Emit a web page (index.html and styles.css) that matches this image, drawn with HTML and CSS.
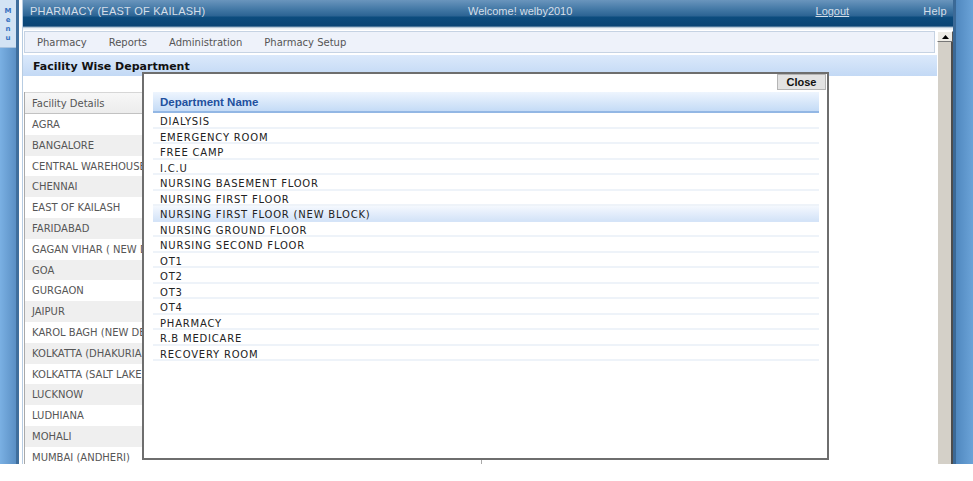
FILE: index.html
```html
<!doctype html>
<html lang="en">
<head>
<meta charset="utf-8" />
<title>Facility Wise Department</title>
<link rel="stylesheet" href="styles.css">
</head>
<body>

<div class="frame">
	<div class="side-menu">
		<div class="menu-tab">M<br>e<br>n<br>u</div>
		<div class="rail-fill"></div>
	</div>

	<div class="main">
		<div class="topbar">
			<span class="app-title">PHARMACY (EAST OF KAILASH)</span>
			<span class="welcome">Welcome! welby2010</span>
			<a class="logout" href="#">Logout</a>
			<span class="help">Help</span>
		</div>

		<div class="body-row">
			<div class="content">
				<nav class="menubar">
					<span>Pharmacy</span>
					<span>Reports</span>
					<span>Administration</span>
					<span>Pharmacy Setup</span>
				</nav>

				<div class="page-title">Facility Wise Department</div>

				<div class="facility-list">
					<div class="facility-head">Facility Details</div>
					<div class="facility-row">AGRA</div>
					<div class="facility-row">BANGALORE</div>
					<div class="facility-row">CENTRAL WAREHOUSE</div>
					<div class="facility-row">CHENNAI</div>
					<div class="facility-row">EAST OF KAILASH</div>
					<div class="facility-row">FARIDABAD</div>
					<div class="facility-row">GAGAN VIHAR ( NEW DELHI)</div>
					<div class="facility-row">GOA</div>
					<div class="facility-row">GURGAON</div>
					<div class="facility-row">JAIPUR</div>
					<div class="facility-row">KAROL BAGH (NEW DELHI)</div>
					<div class="facility-row">KOLKATTA (DHAKURIA)</div>
					<div class="facility-row">KOLKATTA (SALT LAKE)</div>
					<div class="facility-row">LUCKNOW</div>
					<div class="facility-row">LUDHIANA</div>
					<div class="facility-row">MOHALI</div>
					<div class="facility-row">MUMBAI (ANDHERI)</div>
				</div>
			</div>

			<div class="scrollbar">
				<div class="scroll-up">
					<svg width="7" height="4" viewBox="0 0 7 4"><polygon points="0,4 3.5,0 7,4" fill="#000"/></svg>
				</div>
				<div class="scroll-track"></div>
			</div>
		</div>

		<!-- department popup -->
		<div class="modal">
			<div class="modal-bar">
				<button class="close-btn" type="button">Close</button>
			</div>
			<div class="dept-list">
				<div class="dept-head">Department Name</div>
				<div class="dept-row">DIALYSIS</div>
				<div class="dept-row">EMERGENCY ROOM</div>
				<div class="dept-row">FREE CAMP</div>
				<div class="dept-row">I.C.U</div>
				<div class="dept-row">NURSING BASEMENT FLOOR</div>
				<div class="dept-row">NURSING FIRST FLOOR</div>
				<div class="dept-row selected">NURSING FIRST FLOOR (NEW BLOCK)</div>
				<div class="dept-row">NURSING GROUND FLOOR</div>
				<div class="dept-row">NURSING SECOND FLOOR</div>
				<div class="dept-row">OT1</div>
				<div class="dept-row">OT2</div>
				<div class="dept-row">OT3</div>
				<div class="dept-row">OT4</div>
				<div class="dept-row">PHARMACY</div>
				<div class="dept-row">R.B MEDICARE</div>
				<div class="dept-row">RECOVERY ROOM</div>
			</div>
		</div>
	</div>

	<div class="right-strip"></div>
</div>

</body>
</html>
```

FILE: styles.css
```css
html, body {
	margin: 0;
	background: #fff;
}

body {
	font-family: "DejaVu Sans", Verdana, sans-serif;
	font-size: 10px;
	color: #222;
}

.frame {
	display: flex;
	align-items: stretch;
	height: 464px;
	overflow: hidden;
	background: #fff;
}

/* left "Menu" rail */
.side-menu {
	flex: none;
	width: 16px;
	margin-right: 3px;
	display: flex;
	flex-direction: column;
	border-right: 3px solid #3f6e9c;
}
.menu-tab {
	height: 48px;
	flex: none;
	box-sizing: border-box;
	padding-top: 7px;
	background: #d3e3f4;
	border-bottom: 1px solid #a9c4e0;
	color: #3570c0;
	font-weight: bold;
	font-size: 7px;
	line-height: 9px;
	text-align: center;
}
.rail-fill {
	flex: 1;
	background-color: #5f96cc;
	background-image: linear-gradient(90deg, #7ab0e3 0%, #5a8fc4 100%);
}

.main {
	flex: 1;
	min-width: 0;
	position: relative;
	display: flex;
	flex-direction: column;
	border-left: 1px solid #b7cce2;
}

/* title bar */
.topbar {
	flex: none;
	height: 30px;
	box-sizing: border-box;
	padding: 4px 6px 0 7px;
	display: flex;
	align-items: flex-start;
	background: linear-gradient(#6a95bd 0, #4479a6 9px, #2b6393 16px, #0c4c7e 17px,
		#0a4475 26px, #8aa6c0 27px, #e6edf3 28px, #f4f7fa 30px);
	color: #d5dfe9;
	font-family: "Liberation Sans", Arial, sans-serif;
	font-size: 11px;
	line-height: 14px;
}
.app-title {
	width: 438px;
	letter-spacing: 0.25px;
}
.welcome {
	flex: 1;
}
.logout {
	color: #d5dfe9;
	margin-right: 74px;
}
.help {
	letter-spacing: 0.3px;
}

.body-row {
	flex: 1;
	display: flex;
	min-height: 0;
}

.content {
	flex: 1;
	min-width: 0;
	padding-left: 1px;
	overflow: hidden;
}

.menubar {
	height: 22px;
	box-sizing: border-box;
	margin: 1px 2px 0 0;
	padding: 1px 0 0 12px;
	display: flex;
	gap: 22px;
	align-items: center;
	background: #eef2fa;
	border: 1px solid #c6d3e3;
	color: #555;
}

.page-title {
	height: 21px;
	box-sizing: border-box;
	margin: 2px 0 0 -1px;
	padding: 1px 0 0 10px;
	display: flex;
	align-items: center;
	background: linear-gradient(#dbe9fb, #c3d9f5);
	font-weight: bold;
	font-size: 11px;
	color: #111;
}

/* facility table (behind popup) */
.facility-list {
	width: 456px;
	margin-top: 16px;
	border-left: 1px solid #a9a9a9;
	border-right: 1px solid #a9a9a9;
	color: #565656;
}
.facility-head {
	height: 22px;
	box-sizing: border-box;
	padding: 1px 0 0 7px;
	line-height: 20px;
	background: linear-gradient(#f7f7f7, #ececec);
	border-top: 1px solid #d6d6d6;
	border-bottom: 1px solid #c2c2c2;
}
.facility-row {
	height: 20.8px;
	box-sizing: border-box;
	padding: 1px 0 0 7px;
	line-height: 19.8px;
	white-space: nowrap;
}
.facility-row:nth-child(odd) {
	background: #efefef;
}

/* vertical scrollbar */
.scrollbar {
	flex: none;
	width: 16px;
	display: flex;
	flex-direction: column;
	padding-top: 1px;
	box-sizing: border-box;
}
.scroll-up {
	height: 11px;
	box-sizing: border-box;
	display: flex;
	align-items: center;
	justify-content: center;
	background: #eeece6;
	border: 1px solid #fff;
	border-right-color: #555;
	border-bottom-color: #777;
}
.scroll-track {
	flex: 1;
	background: #d4d0c8;
	border-left: 1px solid #fff;
	border-right: 2px solid #4d4d4d;
}

.right-strip {
	flex: none;
	width: 17px;
	background-color: #5f96cc;
	background-image: linear-gradient(90deg, #5088bf 0%, #6ba3d8 100%);
	border-left: 3px solid #3b6996;
}

/* department popup */
.modal {
	position: absolute;
	left: 119px;
	top: 72px;
	width: 687px;
	height: 388px;
	box-sizing: border-box;
	background: #fff;
	border: 2px solid #6e6e6e;
}
.modal-bar {
	display: flex;
	justify-content: flex-end;
	padding-right: 1px;
}
.close-btn {
	width: 49px;
	height: 16px;
	padding: 0;
	margin: 0;
	background: #e3e3e3;
	border: 1px solid #b5b5b5;
	font-family: "Liberation Sans", Arial, sans-serif;
	font-weight: bold;
	font-size: 11px;
	color: #111;
}

.dept-list {
	margin: 2px 8px 0 9px;
}
.dept-head {
	height: 21px;
	box-sizing: border-box;
	padding: 2px 0 0 7px;
	line-height: 17px;
	background: linear-gradient(#eef5fe, #c4dbf6);
	border-bottom: 2px solid #93b7e4;
	font-family: "Liberation Sans", Arial, sans-serif;
	font-weight: bold;
	font-size: 11.5px;
	color: #22509e;
}
.dept-row {
	height: 15.5px;
	box-sizing: border-box;
	padding: 4px 0 0 7px;
	line-height: 9.5px;
	border-bottom: 2px solid #eef3f9;
	letter-spacing: 0.8px;
	color: #222;
	white-space: nowrap;
}
.dept-row.selected {
	background: linear-gradient(#f4f8fe, #d5e4f8);
	border-bottom-color: #d5e4f8;
}
```
